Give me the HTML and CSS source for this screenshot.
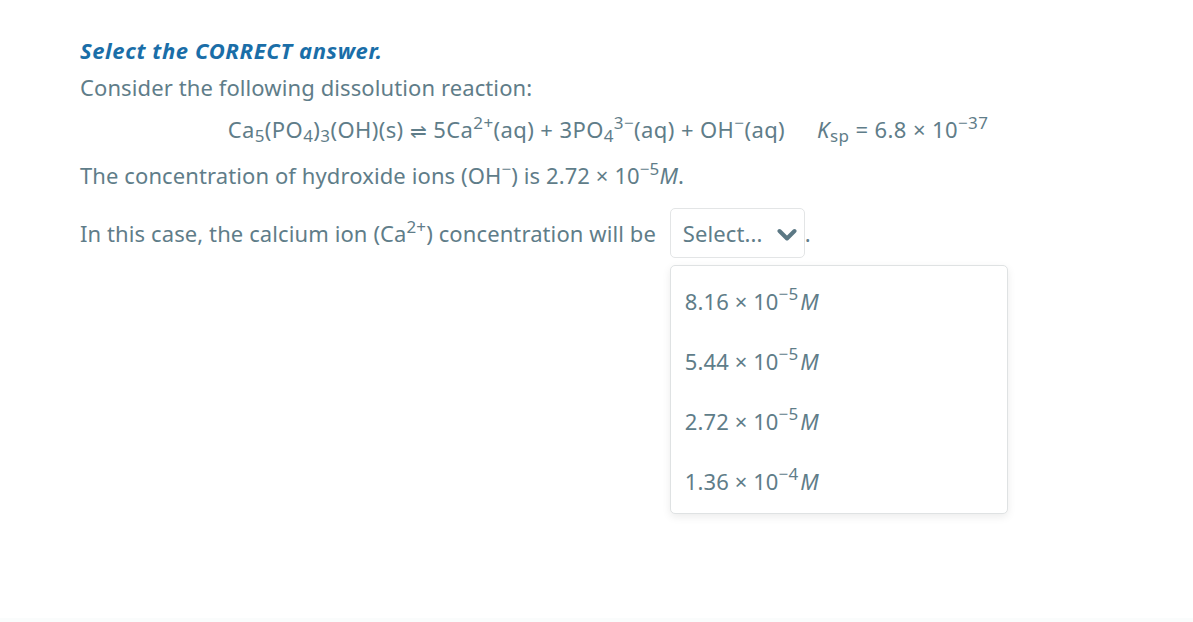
FILE: index.html
```html
<!DOCTYPE html>
<html lang="en">
<head>
<meta charset="utf-8">
<link rel="stylesheet" href="styles.css">
</head>
<body>
<main class="question">
  <h2 class="title">Select the CORRECT answer.</h2>
  <p class="line intro">Consider the following dissolution reaction:</p>
  <p class="equation">Ca<sub>5</sub>(PO<sub>4</sub>)<sub>3</sub>(OH)(s) <span class="eq">⇌</span> 5Ca<sup>2+</sup>(aq) + 3PO<sub>4</sub><sup>3−</sup>(aq) + OH<sup>−</sup>(aq)<span class="ksp"><i>K</i><sub>sp</sub> = 6.8 × 10<sup>−37</sup></span></p>
  <p class="line conc">The concentration of hydroxide ions (OH<sup>−</sup>) is 2.72 × 10<sup>−5</sup><i>M</i>.</p>
  <p class="line answer">In this case, the calcium ion (Ca<sup>2+</sup>) concentration will be <span class="select-wrap"><span class="select"><span class="select-label">Select...</span><svg class="chev" viewBox="0 0 20 14" width="20" height="14"><path d="M2.5 3 L10 10.5 L17.5 3" fill="none" stroke="#5b7884" stroke-width="4" stroke-linecap="round" stroke-linejoin="round"/></svg></span><span class="menu"><span class="opt">8.16 × 10<sup>−5</sup><i>M</i></span><span class="opt">5.44 × 10<sup>−5</sup><i>M</i></span><span class="opt">2.72 × 10<sup>−5</sup><i>M</i></span><span class="opt">1.36 × 10<sup>−4</sup><i>M</i></span></span></span>.</p>
</main>
<div class="footer-strip"></div>
</body>
</html>
```
FILE: styles.css
```css
html, body {
  margin: 0;
  padding: 0;
  background: #ffffff;
}
body {
  font-family: "Noto Sans", "Open Sans", sans-serif;
  color: #5f7d89;
  width: 1193px;
  height: 622px;
  overflow: hidden;
  position: relative;
}
.question {
  padding: 35px 57px 0 80px;
}
.title {
  margin: 0;
  font-size: 22px;
  font-weight: 700;
  font-style: italic;
  color: #1a6ea8;
  line-height: 30px;
  letter-spacing: 0.6px;
}
.line {
  margin: 0;
  font-size: 22px;
  line-height: 30px;
  letter-spacing: 0.1px;
}
.intro { margin-top: 7px; }
.equation {
  margin: 12px 0 0;
  font-size: 22px;
  line-height: 30px;
  text-align: center;
  letter-spacing: 0.4px;
}
.conc { margin-top: 14px; }
sub, sup {
  font-size: 17px;
  line-height: 0;
}
sub { vertical-align: -4px; }
sup { vertical-align: 9px; }
.eq { font-size: 20px; }
.ksp { margin-left: 32px; }
.answer {
  margin-top: 18px;
  line-height: 50px;
  height: 50px;
}
.select-wrap {
  position: relative;
  display: inline-block;
  vertical-align: top;
  height: 50px;
  margin-left: 8px;
}
.select {
  display: flex;
  align-items: center;
  justify-content: space-between;
  height: 50px;
  width: 135px;
  padding: 0 7px 0 12px;
  border: 1px solid #e3e5e6;
  border-radius: 5px;
  box-sizing: border-box;
  line-height: 30px;
}
.chev { margin-top: 3px; }
.menu {
  position: absolute;
  left: 0;
  top: 57px;
  width: 338px;
  box-sizing: border-box;
  padding: 5px 0 2px;
  background: #fff;
  border: 1px solid #dfe2e3;
  border-radius: 5px;
  box-shadow: 0 3px 8px rgba(0,0,0,0.08);
}
.opt {
  display: block;
  height: 60px;
  line-height: 60px;
  padding-left: 14px;
  font-size: 22px;
  white-space: nowrap;
}
.opt sup { vertical-align: 10px; margin-right: 2px; }
.footer-strip {
  position: absolute;
  left: 0;
  right: 0;
  bottom: 0;
  height: 4px;
  background: #fafcfc;
}
```
